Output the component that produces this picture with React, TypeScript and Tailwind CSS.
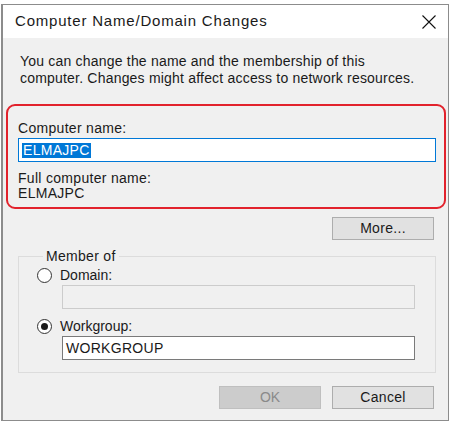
import React from 'react';

const font = { fontFamily: '"Liberation Sans", Arial, sans-serif' };

const Radio = ({ checked, label }: { checked?: boolean; label: string }) => (
  <div className="flex items-center h-[18px]">
    <span className="w-[15px] h-[15px] rounded-full border border-[#333333] bg-white flex items-center justify-center">
      {checked && <span className="w-[7px] h-[7px] rounded-full bg-[#1a1a1a]" />}
    </span>
    <span className="ml-[8px]">{label}</span>
  </div>
);

export default function App() {
  return (
    <div className="w-[450px] h-[424px] bg-white pt-[4px] pl-[1px] text-[14px] text-[#1a1a1a]" style={font}>
      <div className="w-[448px] h-[417px] border border-[#8c8c8c] border-l-2 bg-[#f0f0f0] flex flex-col">
        {/* title bar */}
        <div className="h-[33px] bg-white flex items-center justify-between pl-[12px] pr-[10px]">
          <span className="text-[15px] tracking-[0.8px]">Computer Name/Domain Changes</span>
          <svg width="16" height="16" viewBox="0 0 16 16" className="mr-[1px]">
            <path d="M1.5 1.5 L14.5 14.5 M14.5 1.5 L1.5 14.5" stroke="#111" strokeWidth="1.1" fill="none" />
          </svg>
        </div>

        <div className="flex flex-col">
          <p className="pl-[17px] pt-[15px] leading-[17px] tracking-[0.2px]">
            You can change the name and the membership of this
            <br />
            computer. Changes might affect access to network resources.
          </p>

          {/* highlighted box */}
          <div className="mt-[17px] ml-[3px] mr-[2px] border-2 border-[#e2222c] rounded-[9px] pl-[10px] pr-[8px] pt-[14px] pb-[6px]">
            <div className="leading-[17px] tracking-[0.3px]">Computer name:</div>
            <div className="mt-[1px] h-[24px] border border-[#0078d7] bg-white flex items-center pl-[3px]">
              <span className="bg-[#0078d7] text-white leading-[15px] px-[1px] tracking-[0.3px]">ELMAJPC</span>
            </div>
            <div className="mt-[9px] leading-[15px] tracking-[0.3px]">Full computer name:</div>
            <div className="leading-[15px] tracking-[0.3px]">ELMAJPC</div>
          </div>

          <div className="flex justify-end mr-[14px] mt-[8px]">
            <button className="w-[102px] h-[23px] bg-[#e1e1e1] border border-[#adadad] tracking-[0.3px]">More...</button>
          </div>

          {/* member of group */}
          <fieldset className="mt-[8px] ml-[15px] mr-[12px] border border-[#dcdcdc] pl-[20px] pr-[20px] pb-[12px]">
            <legend className="ml-[4px] px-[3px] leading-[16px] tracking-[0.3px]">Member of</legend>
            <div className="mt-[2px] -ml-[2px]">
              <Radio label="Domain:" />
            </div>
            <div className="mt-[1px] ml-[23px] h-[24px] border border-[#cccccc] bg-[#f0f0f0]" />
            <div className="mt-[8px] -ml-[2px]">
              <Radio checked label="Workgroup:" />
            </div>
            <div className="mt-[1px] ml-[23px] h-[24px] border border-[#7a7a7a] bg-white flex items-center pl-[3px] tracking-[0.3px]">
              WORKGROUP
            </div>
          </fieldset>

          <div className="flex justify-end gap-[11px] mr-[14px] mt-[13px]">
            <button className="w-[102px] h-[23px] bg-[#cccccc] border border-[#bfbfbf] text-[#8a8a8a]">OK</button>
            <button className="w-[102px] h-[23px] bg-[#e1e1e1] border border-[#adadad] tracking-[0.3px]">Cancel</button>
          </div>
        </div>
      </div>
    </div>
  );
}
